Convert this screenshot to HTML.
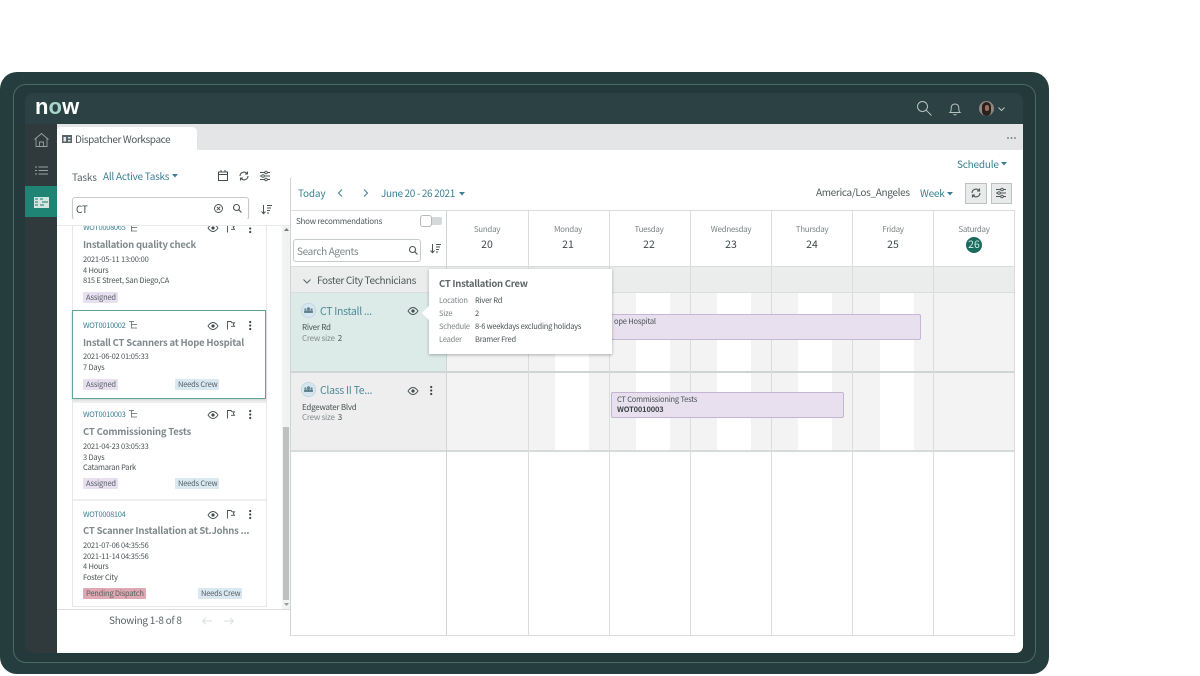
<!DOCTYPE html>
<html><head><meta charset="utf-8"><style>
html,body{margin:0;padding:0;background:#fff}
body{width:1200px;height:676px;position:relative;overflow:hidden;font-family:"Noto Sans CJK SC","Liberation Sans",sans-serif;color:#4a5456}
.a{position:absolute}
.t{position:absolute;white-space:nowrap;line-height:1}
.s10{font-size:10px;letter-spacing:-.35px}
.s8{font-size:7.5px;letter-spacing:-.2px}
.ttl{font-size:9.500px;letter-spacing:-.2px;font-weight:700;color:#7f898b}
.wo{font-size:7.500px;letter-spacing:-.3px;color:#3b7f94}
.link{color:#3b7f94}
.g{color:#7c8587}
svg{position:absolute;overflow:visible}
.tag{position:absolute;height:11px;line-height:11px;font-size:7.500px;letter-spacing:-.2px;padding:0 2px 0 3px;border-radius:1px;color:#566063;white-space:nowrap}
.pur{background:#e8e0f0}.blu{background:#d9e8f1}.red{background:#e0a8b2}
.ln{position:absolute;background:#d9dddd}
.day{font-size:8px;letter-spacing:-.3px;color:#7c8587;text-align:center;width:80px}
.num{font-size:10.500px;color:#3d4749;text-align:center;width:80px}
</style></head><body>
<svg width="0" height="0" style="position:absolute"><defs>
<g id="eye" fill="none" stroke="#444e50" stroke-width=".9"><path d="M0 4C2 1 4 .5 5 .5S8 1 10 4C8 7 6 7.500 5 7.500S2 7 0 4Z"/><circle cx="5" cy="4" r="1.600" fill="#444e50" stroke="none"/></g>
<g id="flag" fill="none" stroke="#444e50" stroke-width=".9"><path d="M.5 8.500V.5H4L5 1.800H7.500L6.300 3.500 7.500 5.300H4"/></g>
<g id="dots" fill="#3b4547"><circle cx="1.200" cy="1" r="1.100"/><circle cx="1.200" cy="4.500" r="1.100"/><circle cx="1.200" cy="8" r="1.100"/></g>
<g id="tree" fill="none" stroke="#5b6668" stroke-width=".8"><path d="M0 .5H5M2.500 .5V7.500M2.500 3.500H8M2.500 7H8"/></g>
<g id="ref" fill="none" stroke="#4a5456" stroke-width="1.100"><path d="M1 5A4 4 0 0 1 8 2.500M9 5A4 4 0 0 1 2 7.500"/><path d="M8.500 .5V3H6M1.500 9.500V7H4"/></g>
<g id="filt" fill="none" stroke="#4a5456" stroke-width=".9"><path d="M0 1.500H4.500M7.500 1.500H10M0 5H1.500M4.500 5H10M0 8.500H4.500M7.500 8.500H10"/><circle cx="6" cy="1.500" r="1.300"/><circle cx="3" cy="5" r="1.300"/><circle cx="6" cy="8.500" r="1.300"/></g>
<g id="srch" fill="none" stroke="#4a5456" stroke-width="1.100"><circle cx="3.500" cy="3.500" r="3"/><path d="M5.800 5.800L8.500 8.500"/></g>
<g id="sort" fill="none" stroke="#4a5456" stroke-width="1"><path d="M2.500 0V8.500M.5 6.500L2.500 8.800 4.500 6.500M6 .5H11M6 3H10M6 5.500H9M6 8H8"/></g>
<g id="crew"><circle cx="7.500" cy="7.500" r="7.200" fill="#d6e6f0" stroke="#bcd3e0" stroke-width=".7"/><g fill="#5f7f8c"><circle cx="7.500" cy="5.800" r="1.500"/><circle cx="4.400" cy="6.500" r="1.100"/><circle cx="10.600" cy="6.500" r="1.100"/><rect x="5.500" y="7.200" width="4" height="2.800" rx=".8"/><rect x="3" y="7.700" width="2.800" height="2.300" rx=".7"/><rect x="9.200" y="7.700" width="2.800" height="2.300" rx=".7"/></g></g>
</defs></svg>

<!-- device -->
<div class="a" style="left:0;top:72px;width:1049px;height:602px;background:#263d3f;border-radius:17px"></div>
<div class="a" style="left:13px;top:84px;width:1021px;height:577px;border:1px solid #4a6b65;border-radius:13px;background:#23393b"></div>
<div class="a" style="left:25px;top:93px;width:998px;height:560px;background:#2b4144;border-radius:8px;overflow:hidden">
  <div class="a" style="left:0;top:31px;width:32px;height:529px;background:#30393b"></div>
  <div class="a" style="left:0;top:93px;width:32px;height:31px;background:#1f8473"></div>
</div>
<div class="a" style="left:57px;top:124px;width:966px;height:529px;background:#fff;border-radius:0 0 7px 0"></div>
<div class="a" style="left:57px;top:124px;width:966px;height:26px;background:#e3e5e6"></div>
<div class="a" style="left:57px;top:127px;width:140px;height:23px;background:#fff;border-radius:4px 5px 0 0"></div>

<!-- logo -->
<div class="t" style="left:35px;top:97px;font:700 22px 'Liberation Sans',sans-serif;color:#fff;letter-spacing:.1px;line-height:20px">n<span style="color:#a5d6c8">o</span>w</div>

<!-- header icons -->
<svg style="left:917px;top:101px" width="15" height="15" fill="none" stroke="#b9c2c2" stroke-width="1"><circle cx="5.500" cy="5.500" r="5"/><path d="M9.200 9.200L14.500 14.500"/></svg>
<svg style="left:949px;top:103px" width="12" height="13" fill="none" stroke="#b9c2c2" stroke-width="1"><path d="M1 9.500Q2.200 8.500 2.200 5.500 2.200 1 6 1T9.800 5.500Q9.800 8.500 11 9.500ZM4.500 11Q6 13 7.500 11"/></svg>
<div class="a" style="left:979px;top:101px;width:15px;height:15px;border-radius:50%;background:#8f8780;overflow:hidden"><div class="a" style="left:3px;top:1px;width:9px;height:14px;background:#2a201d;border-radius:5px"></div><div class="a" style="left:5.500px;top:4px;width:4px;height:6px;background:#9a6f5c;border-radius:2px"></div></div>
<svg style="left:998px;top:107px" width="7" height="4" fill="none" stroke="#b9c2c2"><path d="M.5 .5L3.500 3.500 6.500 .5"/></svg>

<!-- sidebar icons -->
<svg style="left:34px;top:133px" width="15" height="14" fill="none" stroke="#98a2a2" stroke-width=".9"><path d="M.5 6.500L7.500 .5 14.500 6.500M2 5.500V13.500H13V5.500M5.500 13.500V9H9.500V13.500"/></svg>
<svg style="left:35px;top:166px" width="13" height="9" fill="none" stroke="#98a2a2"><path d="M0 1H2M3.500 1H13M0 4.500H2M3.500 4.500H13M0 8H2M3.500 8H13"/></svg>
<svg style="left:34px;top:197px" width="15" height="11"><rect width="15" height="11" fill="#d3e6e0"/><path d="M1 2H4M1 5H4M1 8H4M6 2H9M8 5H14M6 8H10" stroke="#3d8f7e" stroke-width="1.300"/></svg>

<!-- tab -->
<svg style="left:62px;top:135px" width="10" height="8"><rect width="10" height="8" fill="#56666a"/><path d="M1.500 2H4V6.500H1.500ZM6 2H8.500V3.500H6ZM6 5H8.500V6.500H6Z" fill="#e4e8e8"/></svg>
<div class="t s10" style="left:75px;top:134px;color:#4e585a;letter-spacing:-.4px">Dispatcher Workspace</div>
<svg style="left:1007px;top:137px" width="9" height="3" fill="#6a7476"><circle cx="1" cy="1" r=".9"/><circle cx="4.500" cy="1" r=".9"/><circle cx="8" cy="1" r=".9"/></svg>
<div class="t link s10" style="left:957px;top:159px;letter-spacing:-.2px">Schedule</div>
<svg style="left:1001px;top:162px" width="6" height="4"><path d="M0 0H6L3 3.500Z" fill="#3b7f94"/></svg>

<!-- left panel header -->
<div class="t s10" style="left:72px;top:172px;color:#59636a;letter-spacing:-.2px">Tasks</div>
<div class="t link s10" style="left:103px;top:171px;letter-spacing:-.25px">All Active Tasks</div>
<svg style="left:172px;top:174px" width="6" height="4"><path d="M0 0H6L3 3.500Z" fill="#3b7f94"/></svg>
<svg style="left:218px;top:170px" width="10" height="11" fill="none" stroke="#444e50"><rect x=".5" y="2" width="9" height="8.500"/><path d="M.5 4.500H9.500M3 0V2M7 0V2"/></svg>
<svg style="left:239px;top:171px" width="10" height="10"><use href="#ref"/></svg>
<svg style="left:260px;top:171px" width="10" height="10"><use href="#filt"/></svg>
<div class="a" style="left:72px;top:197px;width:175px;height:21px;border:1px solid #c6cbcc;border-radius:3px;box-shadow:0 1px 1px #ddd;background:#fff"></div>
<div class="t s10" style="left:76px;top:204px;color:#40494b">CT</div>
<svg style="left:214px;top:204px" width="9" height="9" fill="none" stroke="#444e50" stroke-width=".9"><circle cx="4.500" cy="4.500" r="4"/><path d="M2.800 2.800L6.200 6.200M6.200 2.800L2.800 6.200"/></svg>
<svg style="left:233px;top:204px" width="9" height="9"><use href="#srch"/></svg>
<svg style="left:261px;top:205px" width="11" height="9"><use href="#sort"/></svg>

<!-- task list -->
<div class="a" style="left:72px;top:225px;width:193px;height:381px;border-left:1px solid #e6e8e8;border-right:1px solid #e6e8e8;border-bottom:1px solid #e6e8e8"></div>
<div class="a" style="left:73px;top:400px;width:193px;height:3px;background:#eef0f0"></div>
<div class="a" style="left:73px;top:499px;width:193px;height:2px;background:#eef0f0"></div>
<div class="a" style="left:282px;top:225px;width:8px;height:384px;background:#f1f2f2"></div>
<div class="a" style="left:283px;top:427px;width:6px;height:173px;background:#bfc1c1"></div>
<svg style="left:284px;top:228px" width="5" height="3"><path d="M2.500 0L5 3H0Z" fill="#777"/></svg>
<svg style="left:284px;top:603px" width="5" height="3"><path d="M2.500 3L5 0H0Z" fill="#999"/></svg>

<div class="t wo" style="left:83px;top:224px">WOT0008065</div>
<svg style="left:129px;top:224px" width="8" height="8"><use href="#tree"/></svg>
<svg style="left:208px;top:224px" width="10" height="8"><use href="#eye"/></svg>
<svg style="left:227px;top:224px" width="8" height="9"><use href="#flag"/></svg>
<svg style="left:249px;top:224px" width="3" height="9"><use href="#dots"/></svg>
<div class="a" style="left:57px;top:219px;width:225px;height:6px;background:#fff"></div>
<div class="a" style="left:57px;top:225px;width:233px;height:1px;background:#e8eaea"></div>
<div class="t ttl" style="left:83px;top:240px">Installation quality check</div>
<div class="t s8" style="left:83px;top:255px;line-height:10.700px;color:#4a5456;white-space:pre-line">2021-05-11 13:00:00
4 Hours
815 E Street, San Diego,CA</div>
<div class="tag pur" style="left:83px;top:292px">Assigned</div>

<div class="a" style="left:72px;top:310px;width:192px;height:87px;border:1.500px solid #5fa596;box-shadow:0 1px 2px #ccc;background:#fff"></div>
<div class="t wo" style="left:83px;top:322px">WOT0010002</div>
<svg style="left:129px;top:321px" width="8" height="8"><use href="#tree"/></svg>
<svg style="left:208px;top:322px" width="10" height="8"><use href="#eye"/></svg>
<svg style="left:227px;top:321px" width="8" height="9"><use href="#flag"/></svg>
<svg style="left:249px;top:321px" width="3" height="9"><use href="#dots"/></svg>
<div class="t ttl" style="left:83px;top:338px">Install CT Scanners at Hope Hospital</div>
<div class="t s8" style="left:83px;top:352px;line-height:10.700px;color:#4a5456;white-space:pre-line">2021-06-02 01:05:33
7 Days</div>
<div class="tag pur" style="left:83px;top:379px">Assigned</div>
<div class="tag blu" style="left:175px;top:379px">Needs Crew</div>

<div class="t wo" style="left:83px;top:411px">WOT0010003</div>
<svg style="left:129px;top:410px" width="8" height="8"><use href="#tree"/></svg>
<svg style="left:208px;top:411px" width="10" height="8"><use href="#eye"/></svg>
<svg style="left:227px;top:410px" width="8" height="9"><use href="#flag"/></svg>
<svg style="left:249px;top:410px" width="3" height="9"><use href="#dots"/></svg>
<div class="t ttl" style="left:83px;top:427px">CT Commissioning Tests</div>
<div class="t s8" style="left:83px;top:442px;line-height:10.700px;color:#4a5456;white-space:pre-line">2021-04-23 03:05:33
3 Days
Catamaran Park</div>
<div class="tag pur" style="left:83px;top:478px">Assigned</div>
<div class="tag blu" style="left:175px;top:478px">Needs Crew</div>

<div class="t wo" style="left:83px;top:511px">WOT0008104</div>
<svg style="left:208px;top:511px" width="10" height="8"><use href="#eye"/></svg>
<svg style="left:227px;top:510px" width="8" height="9"><use href="#flag"/></svg>
<svg style="left:249px;top:510px" width="3" height="9"><use href="#dots"/></svg>
<div class="t ttl" style="left:83px;top:526px">CT Scanner Installation at St.Johns ...</div>
<div class="t s8" style="left:83px;top:541px;line-height:10.700px;color:#4a5456;white-space:pre-line">2021-07-06 04:35:56
2021-11-14 04:35:56
4 Hours
Foster City</div>
<div class="tag red" style="left:83px;top:588px">Pending Dispatch</div>
<div class="tag blu" style="left:198px;top:588px">Needs Crew</div>

<div class="a" style="left:57px;top:609px;width:233px;height:1px;background:#d9dddd"></div>
<div class="t s10" style="left:109px;top:615px;color:#5a6466;letter-spacing:-.25px">Showing 1-8 of 8</div>
<svg style="left:202px;top:617px" width="31" height="8" fill="none" stroke="#d8dcdc"><path d="M10 4H1M4 .7L.8 4 4 7.300M22 4H31M28 .7L31.200 4 28 7.300"/></svg>

<!-- right pane -->
<div class="a" style="left:290px;top:178px;width:1px;height:458px;background:#d0d4d4"></div>
<div class="t link s10" style="left:298px;top:188px;letter-spacing:-.2px">Today</div>
<svg style="left:337px;top:189px" width="35" height="8" fill="none" stroke="#3b7f94"><path d="M5 .5L1.500 4 5 7.500M27 .5L30.500 4 27 7.500"/></svg>
<div class="t link s10" style="left:381px;top:188px">June 20 - 26 2021</div>
<svg style="left:459px;top:192px" width="6" height="4"><path d="M0 0H6L3 3.500Z" fill="#3b7f94"/></svg>
<div class="t s10" style="left:816px;top:187px;color:#50595b;letter-spacing:-.33px">America/Los_Angeles</div>
<div class="t link s10" style="left:920px;top:188px;letter-spacing:-.2px">Week</div>
<svg style="left:947px;top:192px" width="6" height="4"><path d="M0 0H6L3 3.500Z" fill="#3b7f94"/></svg>
<div class="a" style="left:965px;top:183px;width:20px;height:19px;background:#e9ebeb;border:1px solid #bcc1c1"></div>
<div class="a" style="left:991px;top:183px;width:19px;height:19px;background:#e9ebeb;border:1px solid #bcc1c1"></div>
<svg style="left:971px;top:188px" width="10" height="10"><use href="#ref"/></svg>
<svg style="left:996px;top:188px" width="10" height="10"><use href="#filt"/></svg>

<!-- grid -->
<div class="a" style="left:291px;top:266px;width:723px;height:27px;background:#ebecec"></div>
<div class="a" style="left:291px;top:293px;width:155px;height:79px;background:#dcebe7"></div>
<div class="a" style="left:291px;top:373px;width:155px;height:78px;background:#eeeeee"></div>
<div class="a" style="left:447px;top:293px;width:567px;height:158px;background:#f3f3f3"></div>
<div class="a" style="left:555px;top:293px;width:34px;height:158px;background:#fff"></div>
<div class="a" style="left:636px;top:293px;width:34px;height:158px;background:#fff"></div>
<div class="a" style="left:717px;top:293px;width:34px;height:158px;background:#fff"></div>
<div class="a" style="left:798px;top:293px;width:34px;height:158px;background:#fff"></div>
<div class="a" style="left:880px;top:293px;width:34px;height:158px;background:#fff"></div>
<div class="ln" style="left:291px;top:210px;width:724px;height:1px"></div>
<div class="ln" style="left:291px;top:266px;width:724px;height:1px"></div>
<div class="ln" style="left:291px;top:292px;width:724px;height:1px"></div>
<div class="a" style="left:291px;top:371px;width:724px;height:2px;background:#cfd5d5"></div>
<div class="a" style="left:291px;top:450px;width:724px;height:2px;background:#d6dbdb"></div>
<div class="ln" style="left:291px;top:635px;width:724px;height:1px"></div>
<div class="ln" style="left:446px;top:210px;width:1px;height:425px;background:#cfd4d4"></div>
<div class="ln" style="left:528px;top:210px;width:1px;height:425px"></div>
<div class="ln" style="left:609px;top:210px;width:1px;height:425px"></div>
<div class="ln" style="left:690px;top:210px;width:1px;height:425px"></div>
<div class="ln" style="left:771px;top:210px;width:1px;height:425px"></div>
<div class="ln" style="left:852px;top:210px;width:1px;height:425px"></div>
<div class="ln" style="left:933px;top:210px;width:1px;height:425px"></div>
<div class="ln" style="left:1014px;top:210px;width:1px;height:426px"></div>

<div class="t day" style="left:447px;top:226px">Sunday</div><div class="t num" style="left:447px;top:240px">20</div>
<div class="t day" style="left:528px;top:226px">Monday</div><div class="t num" style="left:528px;top:240px">21</div>
<div class="t day" style="left:609px;top:226px">Tuesday</div><div class="t num" style="left:609px;top:240px">22</div>
<div class="t day" style="left:691px;top:226px">Wednesday</div><div class="t num" style="left:691px;top:240px">23</div>
<div class="t day" style="left:772px;top:226px">Thursday</div><div class="t num" style="left:772px;top:240px">24</div>
<div class="t day" style="left:853px;top:226px">Friday</div><div class="t num" style="left:853px;top:240px">25</div>
<div class="t day" style="left:934px;top:226px">Saturday</div>
<div class="a" style="left:966px;top:237px;width:16px;height:16px;border-radius:50%;background:#1b6b5e"></div>
<div class="t num" style="left:934px;top:240px;color:#d9ece7">26</div>

<div class="t" style="left:296px;top:218px;font-size:8px;letter-spacing:-.25px;color:#4e585a">Show recommendations</div>
<div class="a" style="left:421px;top:217px;width:21px;height:8px;background:#d5d9d9;border-radius:2px"></div>
<div class="a" style="left:420px;top:215px;width:10px;height:10px;background:#fff;border:1px solid #b4baba;border-radius:3px"></div>
<div class="a" style="left:293px;top:239px;width:126px;height:21px;border:1px solid #c6cbcc;border-radius:3px;background:#fff"></div>
<div class="t s10" style="left:297px;top:246px;color:#7d8688">Search Agents</div>
<svg style="left:409px;top:246px" width="9" height="9"><use href="#srch"/></svg>
<svg style="left:430px;top:244px" width="11" height="9"><use href="#sort"/></svg>
<svg style="left:303px;top:279px" width="8" height="5" fill="none" stroke="#5a6466"><path d="M.5 .5L4 4 7.500 .5"/></svg>
<div class="t s10" style="left:317px;top:275px;color:#4e585a;letter-spacing:-.33px">Foster City Technicians</div>

<svg style="left:301px;top:303px" width="15" height="15"><use href="#crew"/></svg>
<div class="t" style="left:320px;top:307px;font-size:10.500px;letter-spacing:-.3px;color:#4d8a98">CT Install ...</div>
<svg style="left:408px;top:307px" width="10" height="8"><use href="#eye"/></svg>
<div class="t" style="left:302px;top:324px;font-size:8px;letter-spacing:-.25px;color:#4a5456">River Rd</div>
<div class="t" style="left:302px;top:335px;font-size:8px;letter-spacing:-.25px;color:#838c8e">Crew size &nbsp;<span style="color:#4a5456">2</span></div>

<svg style="left:301px;top:382px" width="15" height="15"><use href="#crew"/></svg>
<div class="t" style="left:320px;top:386px;font-size:10.500px;letter-spacing:-.3px;color:#4d8a98">Class II Te...</div>
<svg style="left:408px;top:387px" width="10" height="8"><use href="#eye"/></svg>
<svg style="left:430px;top:386px" width="3" height="9"><use href="#dots"/></svg>
<div class="t" style="left:302px;top:404px;font-size:8px;letter-spacing:-.25px;color:#4a5456">Edgewater Blvd</div>
<div class="t" style="left:302px;top:414px;font-size:8px;letter-spacing:-.25px;color:#838c8e">Crew size &nbsp;<span style="color:#4a5456">3</span></div>

<!-- events -->
<div class="a" style="left:600px;top:314px;width:319px;height:24px;background:#e8dfef;border:1px solid #c6b8d4;border-radius:2px"></div>
<div class="t s8" style="left:614px;top:318px;color:#4a5456">ope Hospital</div>
<div class="a" style="left:611px;top:392px;width:231px;height:24px;background:#e8dfef;border:1px solid #c2b4d2;border-radius:2px"></div>
<div class="t s8" style="left:617px;top:396px;color:#4a5456">CT Commissioning Tests</div>
<div class="t" style="left:617px;top:406px;font-size:7.500px;letter-spacing:-.15px;font-weight:700;color:#3c4648">WOT0010003</div>

<!-- popover -->
<div class="a" style="left:429px;top:269px;width:183px;height:85px;background:#fff;box-shadow:0 1px 3px rgba(0,0,0,.3)"></div>
<div class="a" style="left:424px;top:308px;width:10px;height:10px;background:#fff;transform:rotate(45deg)"></div>
<div class="t" style="left:439px;top:279px;font-size:9.500px;letter-spacing:-.25px;font-weight:700;color:#5d6769">CT Installation Crew</div>
<div class="t g s8" style="left:439px;top:297px">Location</div><div class="t s8" style="left:475px;top:297px">River Rd</div>
<div class="t g s8" style="left:439px;top:310px">Size</div><div class="t s8" style="left:475px;top:310px">2</div>
<div class="t g s8" style="left:439px;top:323px">Schedule</div><div class="t s8" style="left:475px;top:323px;letter-spacing:-.25px">8-6 weekdays excluding holidays</div>
<div class="t g s8" style="left:439px;top:336px">Leader</div><div class="t s8" style="left:475px;top:336px">Bramer Fred</div>
</body></html>
